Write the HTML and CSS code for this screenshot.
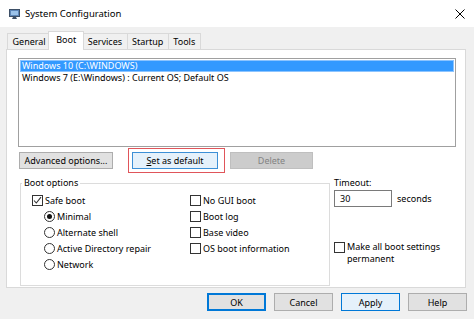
FILE: index.html
```html
<!DOCTYPE html>
<html lang="en">
<head>
    <meta charset="UTF-8">
    <meta name="viewport" content="width=device-width, initial-scale=1.0">
    <title>System Configuration</title>
    <link rel="stylesheet" href="styles.css">
</head>
<body>
    <div class="window">
        <div class="titlebar">
            <svg class="app_icon" width="13" height="12" viewBox="0 0 13 12">
                <rect x="1.5" y="1.5" width="10" height="7" fill="#5d86b8" stroke="#3d4f66"/>
                <rect x="3" y="3" width="7" height="4" fill="#9cc3ea"/>
                <path d="M4 11h5l-1-2H5z" fill="#3d4f66"/>
            </svg>
            <span class="title">System Configuration</span>
            <svg class="close" width="10" height="10" viewBox="0 0 10 10">
                <path d="M0.5 0.5L9.5 9.5M9.5 0.5L0.5 9.5" stroke="#000" stroke-width="1"/>
            </svg>
        </div>

        <div class="tabs">
            <span class="tab">General</span>
            <span class="tab on">Boot</span>
            <span class="tab">Services</span>
            <span class="tab">Startup</span>
            <span class="tab">Tools</span>
        </div>

        <div class="panel">
            <div class="oslist">
                <div class="os on">Windows 10 (C:\WINDOWS)</div>
                <div class="os">Windows 7 (E:\Windows) : Current OS; Default OS</div>
            </div>

            <div class="os_buttons">
                <button class="btn btn_adv">Advanced options...</button>
                <button class="btn btn_hot"><u>S</u>et as default</button>
                <button class="btn btn_off">Delete</button>
            </div>

            <div class="lower">
                <fieldset class="group">
                    <legend>Boot options</legend>
                    <div class="group_cols">
                        <div class="col">
                            <div class="row">
                                <span class="check">
                                    <svg width="9" height="9" viewBox="0 0 9 9"><polyline points="1,4.5 3.3,7 8,1.2" fill="none" stroke="#333" stroke-width="1.1"/></svg>
                                </span>Safe boot
                            </div>
                            <div class="row sub"><span class="radio on"></span>Minimal</div>
                            <div class="row sub"><span class="radio"></span>Alternate shell</div>
                            <div class="row sub"><span class="radio"></span>Active Directory repair</div>
                            <div class="row sub"><span class="radio"></span>Network</div>
                        </div>
                        <div class="col">
                            <div class="row"><span class="check"></span>No GUI boot</div>
                            <div class="row"><span class="check"></span>Boot log</div>
                            <div class="row"><span class="check"></span>Base video</div>
                            <div class="row"><span class="check"></span>OS boot information</div>
                        </div>
                    </div>
                </fieldset>

                <div class="side">
                    <div class="timeout_label">Timeout:</div>
                    <div class="timeout">
                        <span class="field">30</span>
                        <span class="unit">seconds</span>
                    </div>
                    <div class="permanent">
                        <span class="check"></span>
                        <span>Make all boot settings<br>permanent</span>
                    </div>
                </div>
            </div>
        </div>

        <div class="footer">
            <button class="btn btn_foot btn_default">OK</button>
            <button class="btn btn_foot">Cancel</button>
            <button class="btn btn_foot btn_focus">Apply</button>
            <button class="btn btn_foot">Help</button>
        </div>
    </div>
</body>
</html>
```

FILE: styles.css
```css
body {
    margin: 0;
    background: #f0f0f0;
    font: 9px "Noto Sans", "Open Sans", sans-serif;
    color: #000;
}
.window {
    width: 474px;
    height: 319px;
    overflow: hidden;
}
.titlebar {
    height: 27px;
    background: #fff;
    display: flex;
    align-items: center;
    padding-left: 8px;
}
.app_icon {
    margin-right: 4px;
}
.title {
    font-size: 9.5px;
}
.close {
    margin-left: auto;
    margin-right: 9px;
}

/* tabs */
.tabs {
    display: flex;
    align-items: flex-end;
    height: 22px;
    padding-left: 7px;
}
.tab {
    box-sizing: border-box;
    height: 16px;
    line-height: 16px;
    padding: 0 4.5px;
    border: 1px solid #d9d9d9;
    border-bottom: 0;
    margin-right: -1px;
    background: #f0f0f0;
}
.tab.on {
    height: 19px;
    line-height: 15px;
    background: #fff;
    padding: 0 7px;
    margin: 0 -2px -1px -2px;
    position: relative;
    z-index: 1;
}

/* panel */
.panel {
    box-sizing: border-box;
    width: 460px;
    height: 239px;
    margin-left: 6px;
    padding: 8px 9px 0 11px;
    border: 1px solid #d9d9d9;
    background: #fff;
}
.oslist {
    box-sizing: border-box;
    height: 89px;
    padding: 1px;
    border: 1px solid #a0a0a0;
}
.os {
    height: 12px;
    line-height: 12px;
    padding-left: 2px;
    white-space: nowrap;
}
.os.on {
    background: #3399ff;
    color: #fff;
    box-shadow: inset 0 0 0 1px #8cc4ff;
}

.btn {
    box-sizing: border-box;
    height: 17px;
    padding: 0;
    font: inherit;
    color: #000;
    background: #e1e1e1;
    border: 1px solid #adadad;
    white-space: nowrap;
}
.os_buttons {
    display: flex;
    margin-top: 5px;
}
.btn_adv {
    width: 94px;
    margin-left: 1px;
}
.btn_hot {
    width: 86px;
    margin-left: 19px;
    background: #e5f1fb;
    border-color: #3c8fd6;
    position: relative;
}
.btn_hot::after {
    content: "";
    position: absolute;
    left: -5px;
    right: -8px;
    top: -5px;
    bottom: -5px;
    border: 1px solid #e0555a;
}
.btn_off {
    width: 83px;
    margin-left: 12px;
    background: #cccccc;
    border-color: #bfbfbf;
    color: #838383;
}

/* boot options */
.lower {
    display: flex;
    margin-top: 8px;
}
.group {
    box-sizing: border-box;
    width: 310px;
    height: 109px;
    margin: 0 0 0 2px;
    padding: 0 0 0 1px;
    border: 1px solid #dcdcdc;
}
.group legend {
    padding: 0 2px;
    line-height: 12px;
}
.group_cols {
    display: grid;
    grid-template-columns: 158px 1fr;
    padding: 3px 0 0 10px;
}
.row {
    display: flex;
    align-items: center;
    height: 16px;
    white-space: nowrap;
}
.row.sub {
    padding-left: 12px;
}
.check {
    box-sizing: border-box;
    width: 11px;
    height: 11px;
    border: 1px solid #333;
    margin-right: 2px;
    display: flex;
    align-items: center;
    justify-content: center;
    flex-shrink: 0;
    background: #fff;
}
.radio {
    box-sizing: border-box;
    width: 11px;
    height: 11px;
    border: 1px solid #333;
    border-radius: 50%;
    margin-right: 2px;
    display: flex;
    align-items: center;
    justify-content: center;
}
.radio.on::after {
    content: "";
    width: 5px;
    height: 5px;
    border-radius: 50%;
    background: #111;
}

.side {
    margin-left: 4px;
}
.timeout_label {
    line-height: 12px;
}
.timeout {
    display: flex;
    align-items: center;
    margin-top: 1px;
}
.field {
    box-sizing: border-box;
    width: 58px;
    height: 17px;
    line-height: 15px;
    padding-left: 5px;
    border: 1px solid #7a7a7a;
}
.unit {
    margin-left: 5px;
}
.permanent {
    display: flex;
    margin-top: 34px;
    line-height: 12px;
}
.permanent .check {
    margin-top: 1px;
}

/* bottom buttons */
.footer {
    display: flex;
    justify-content: flex-end;
    gap: 8px;
    padding: 5px 7px 0 0;
}
.btn_foot {
    width: 59px;
    height: 18px;
}
.btn_default {
    border-color: #0078d7;
    box-shadow: inset 0 0 0 1px #0078d7;
}
.btn_focus {
    background: #e5f1fb;
    border-color: #0078d7;
}
```
